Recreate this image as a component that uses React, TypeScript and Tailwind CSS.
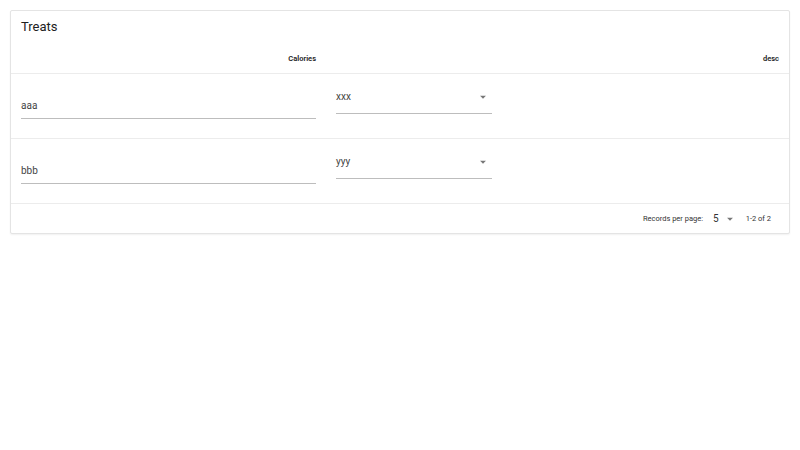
import React from 'react';

const rows = [
  { name: 'aaa', desc: 'xxx' },
  { name: 'bbb', desc: 'yyy' },
];

function DropArrow({ className = '' }: { className?: string }) {
  return (
    <svg viewBox="0 0 24 24" className={className} fill="currentColor">
      <path d="M7 10l5 5 5-5z" />
    </svg>
  );
}

export default function App() {
  return (
    <div className="min-h-screen bg-white p-[10px]" style={{ fontFamily: 'Roboto, "Liberation Sans", sans-serif' }}>
      <div className="border border-[#e4e4e4] rounded-[2px] shadow-[0_1px_2px_rgba(0,0,0,0.06)] bg-white">
        {/* title */}
        <div className="h-[34px] flex items-center px-[10px] pb-[3px]">
          <h2 className="text-[13px] text-[#212121] leading-none">Treats</h2>
        </div>

        {/* header */}
        <div className="h-[29px] flex items-center border-b border-[#ececec] px-[10px]">
          <div className="w-[295px] text-right text-[7.5px] font-semibold text-[#222]">Calories</div>
          <div className="ml-[20px] w-[156px]" />
          <div className="flex-1 text-right text-[7.5px] font-semibold text-[#222]">desc</div>
        </div>

        {rows.map((r) => (
          <div key={r.name} className="h-[65px] flex items-end border-b border-[#ececec] px-[10px]">
            <div className="w-[295px] mb-[19px]">
              <div className="border-b border-[#bdbdbd] pb-[2px] text-[10px] leading-[20px] text-[#444]">
                {r.name}
              </div>
            </div>
            <div className="ml-[20px] w-[156px] mb-[24px]">
              <div className="relative border-b border-[#bdbdbd] pb-[6px] text-[10px] leading-[20px] text-[#444]">
                {r.desc}
                <DropArrow className="absolute right-[2px] top-[3px] w-[14px] h-[14px] text-[#777]" />
              </div>
            </div>
            <div className="flex-1" />
          </div>
        ))}

        {/* footer */}
        <div className="h-[29px] flex items-center justify-end pr-[18px] text-[7.5px] text-[#333]">
          <span>Records per page:</span>
          <span className="ml-[10px] text-[10px]">5</span>
          <DropArrow className="ml-[4px] w-[14px] h-[14px] text-[#777]" />
          <span className="ml-[9px]">1-2 of 2</span>
        </div>
      </div>
    </div>
  );
}
